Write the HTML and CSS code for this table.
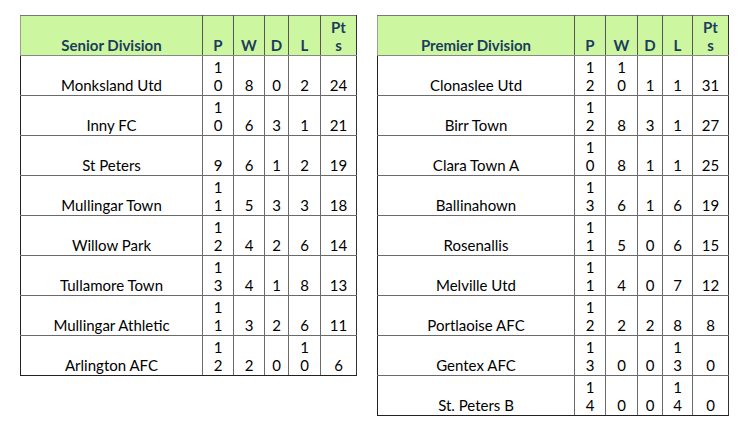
FILE: index.html
```html
<!DOCTYPE html>
<html lang="en">
<head>
<meta charset="utf-8">
<title>League Tables</title>
<link rel="stylesheet" href="styles.css">
</head>
<body>
<div class="page">
  <table class="league league-senior">
    <colgroup>
      <col class="c-name"><col class="c-p"><col class="c-w"><col class="c-d"><col class="c-l"><col class="c-pts">
    </colgroup>
    <thead>
      <tr><th class="name">Senior Division</th><th>P</th><th>W</th><th>D</th><th>L</th><th>Pt<br>s</th></tr>
    </thead>
    <tbody>
      <tr><td class="name">Monksland Utd</td><td>1<br>0</td><td>8</td><td>0</td><td>2</td><td>24</td></tr>
      <tr><td class="name">Inny FC</td><td>1<br>0</td><td>6</td><td>3</td><td>1</td><td>21</td></tr>
      <tr><td class="name">St Peters</td><td>9</td><td>6</td><td>1</td><td>2</td><td>19</td></tr>
      <tr><td class="name">Mullingar Town</td><td>1<br>1</td><td>5</td><td>3</td><td>3</td><td>18</td></tr>
      <tr><td class="name">Willow Park</td><td>1<br>2</td><td>4</td><td>2</td><td>6</td><td>14</td></tr>
      <tr><td class="name">Tullamore Town</td><td>1<br>3</td><td>4</td><td>1</td><td>8</td><td>13</td></tr>
      <tr><td class="name">Mullingar Athletic</td><td>1<br>1</td><td>3</td><td>2</td><td>6</td><td>11</td></tr>
      <tr><td class="name">Arlington AFC</td><td>1<br>2</td><td>2</td><td>0</td><td>1<br>0</td><td>6</td></tr>
    </tbody>
  </table>

  <table class="league league-premier">
    <colgroup>
      <col class="c-name"><col class="c-p"><col class="c-w"><col class="c-d"><col class="c-l"><col class="c-pts">
    </colgroup>
    <thead>
      <tr><th class="name">Premier Division</th><th>P</th><th>W</th><th>D</th><th>L</th><th>Pt<br>s</th></tr>
    </thead>
    <tbody>
      <tr><td class="name">Clonaslee Utd</td><td>1<br>2</td><td>1<br>0</td><td>1</td><td>1</td><td>31</td></tr>
      <tr><td class="name">Birr Town</td><td>1<br>2</td><td>8</td><td>3</td><td>1</td><td>27</td></tr>
      <tr><td class="name">Clara Town A</td><td>1<br>0</td><td>8</td><td>1</td><td>1</td><td>25</td></tr>
      <tr><td class="name">Ballinahown</td><td>1<br>3</td><td>6</td><td>1</td><td>6</td><td>19</td></tr>
      <tr><td class="name">Rosenallis</td><td>1<br>1</td><td>5</td><td>0</td><td>6</td><td>15</td></tr>
      <tr><td class="name">Melville Utd</td><td>1<br>1</td><td>4</td><td>0</td><td>7</td><td>12</td></tr>
      <tr><td class="name">Portlaoise AFC</td><td>1<br>2</td><td>2</td><td>2</td><td>8</td><td>8</td></tr>
      <tr><td class="name">Gentex AFC</td><td>1<br>3</td><td>0</td><td>0</td><td>1<br>3</td><td>0</td></tr>
      <tr><td class="name">St. Peters B</td><td>1<br>4</td><td>0</td><td>0</td><td>1<br>4</td><td>0</td></tr>
    </tbody>
  </table>
</div>
</body>
</html>
```

FILE: styles.css
```css
html, body {
  margin: 0;
  padding: 0;
  background: #ffffff;
}

.page {
  display: flex;
  align-items: flex-start;
  gap: 20px;
  padding: 15px 0 0 20px;
  font-family: Lato, "Open Sans", "Liberation Sans", sans-serif;
  font-size: 15px;
  color: #000000;
}

.league {
  border-collapse: collapse;
  table-layout: fixed;
}

.league-senior { width: 336px; }
.league-premier { width: 351px; }

.league-senior .c-name { width: 182px; }
.league-senior .c-p { width: 31px; }
.league-senior .c-w { width: 31px; }
.league-senior .c-d { width: 24px; }
.league-senior .c-l { width: 32px; }
.league-senior .c-pts { width: 36px; }

.league-premier .c-name { width: 197px; }
.league-premier .c-p { width: 31px; }
.league-premier .c-w { width: 32px; }
.league-premier .c-d { width: 25px; }
.league-premier .c-l { width: 30px; }
.league-premier .c-pts { width: 36px; }

.league th,
.league td {
  height: 38px;
  padding: 0 0 1px 0;
  line-height: 18px;
  text-align: center;
  vertical-align: bottom;
  border: 1px solid #555555;
  white-space: nowrap;
}

.league th {
  background: #ccf7a0;
  color: #1c3d5c;
  font-weight: 700;
  border-top-color: #777777;
  border-bottom-color: #888888;
}

.league thead th:first-child {
  border-left-color: #9aa08f;
}

.league td {
  border-color: #6a6a6a;
}

.league td.name {
  border-left-color: #222222;
}

.league tbody tr:last-child td {
  border-bottom-color: #222222;
}

.league td:last-child,
.league th:last-child {
  border-right-color: #333333;
}
```
